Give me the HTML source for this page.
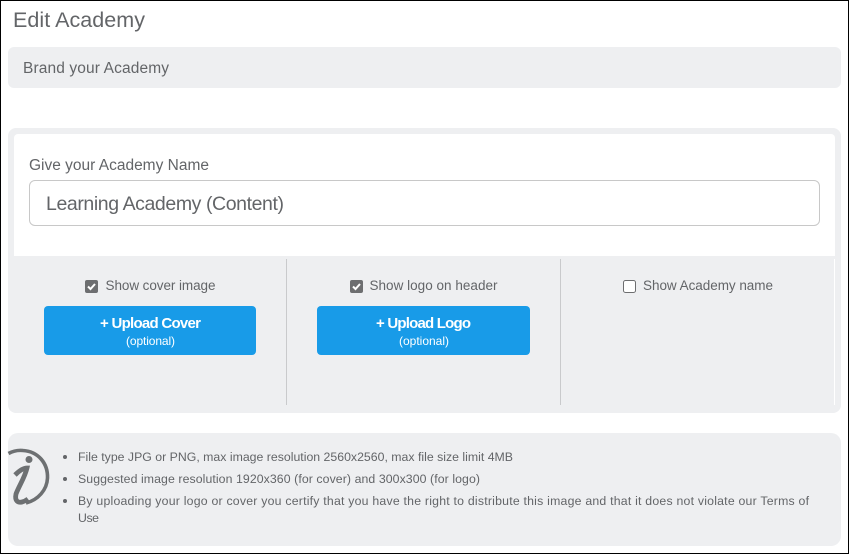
<!DOCTYPE html>
<html><head><meta charset="utf-8"><style>
html,body{margin:0;padding:0;background:#fff}
body{width:849px;height:554px;position:relative;overflow:hidden}
.a{position:absolute;box-sizing:border-box}
svg{position:absolute;left:0;top:0}
text{font-family:"Liberation Sans",sans-serif;fill:#636568}
</style></head><body>
<div class="a" style="left:0;top:0;width:849px;height:554px;border:1px solid #000"></div>
<div class="a" style="left:8px;top:47px;width:833px;height:41px;background:#eeeff1;border-radius:6px"></div>
<div class="a" style="left:8px;top:128px;width:833px;height:285px;background:#eeeff1;border-radius:8px"></div>
<div class="a" style="left:14px;top:134px;width:821px;height:122px;background:#fff;border-radius:4px 4px 0 0"></div>
<div class="a" style="left:29px;top:180px;width:791px;height:46px;background:#fff;border:1px solid #c8c8c8;border-radius:6px"></div>
<div class="a" style="left:286px;top:259px;width:1px;height:146px;background:#c9cacc"></div>
<div class="a" style="left:560px;top:259px;width:1px;height:146px;background:#c9cacc"></div>
<div class="a" style="left:834px;top:259px;width:1px;height:146px;background:#fff"></div>
<div class="a" style="left:44px;top:306px;width:212px;height:49px;background:#189be8;border-radius:4px"></div>
<div class="a" style="left:317px;top:306px;width:213px;height:49px;background:#189be8;border-radius:4px"></div>
<div class="a" style="left:8px;top:433px;width:833px;height:113px;background:#eeeff1;border-radius:10px"></div>
<svg width="849" height="554" viewBox="0 0 849 554">
<rect x="85" y="280" width="13" height="13" rx="2" fill="#6d6e70"/>
<path d="M88 286.500l2.500 2.500 4.500-5" fill="none" stroke="#fff" stroke-width="2"/>
<rect x="350" y="280" width="13" height="13" rx="2" fill="#6d6e70"/>
<path d="M353 286.500l2.500 2.500 4.500-5" fill="none" stroke="#fff" stroke-width="2"/>
<rect x="623.500" y="280.500" width="12" height="12" rx="2" fill="#fff" stroke="#6d6e70"/>
<circle cx="65" cy="457" r="2" fill="#636568"/>
<circle cx="65" cy="479" r="2" fill="#636568"/>
<circle cx="65" cy="501" r="2" fill="#636568"/>
<path d="M8.500 453.500C13 451 18 450 23 450.500C38 451.500 48 463 47.500 478C47 490 38 500 26 503" fill="none" stroke="#6d7072" stroke-width="3.600"/>
<path d="M15 475C19 471 23 468 27 468C25 477 19 486 16 494C14.500 501 18 503 22 502C24 501.500 26 500.500 28 499" fill="none" stroke="#6d7072" stroke-width="4.800"/>
<circle cx="29" cy="459.500" r="3.500" fill="#6d7072"/>
<text x="13" y="27" font-size="21.500" textLength="132" lengthAdjust="spacing">Edit Academy</text>
<text x="23" y="73" font-size="15.500" textLength="146" lengthAdjust="spacing">Brand your Academy</text>
<text x="29" y="170" font-size="15.500" textLength="180" lengthAdjust="spacing">Give your Academy Name</text>
<text x="46" y="210" font-size="19.500" textLength="238" lengthAdjust="spacing">Learning Academy (Content)</text>
<text x="105.500" y="290" font-size="13.500" textLength="110" lengthAdjust="spacing">Show cover image</text>
<text x="369.500" y="290" font-size="13.500" textLength="128" lengthAdjust="spacing">Show logo on header</text>
<text x="643" y="290" font-size="13.500" textLength="130" lengthAdjust="spacing">Show Academy name</text>
<text x="100" y="328" font-size="15" font-weight="700" textLength="101" lengthAdjust="spacing" style="fill:#fff">+ Upload Cover</text>
<text x="376" y="328" font-size="15" font-weight="700" textLength="95" lengthAdjust="spacing" style="fill:#fff">+ Upload Logo</text>
<text x="126" y="345" font-size="12" textLength="49" lengthAdjust="spacing" style="fill:#fff">(optional)</text>
<text x="399" y="345" font-size="12" textLength="50" lengthAdjust="spacing" style="fill:#fff">(optional)</text>
<text x="78" y="461" font-size="12.300" textLength="435" lengthAdjust="spacing">File type JPG or PNG, max image resolution 2560x2560, max file size limit 4MB</text>
<text x="78" y="483" font-size="12.300" textLength="402" lengthAdjust="spacing">Suggested image resolution 1920x360 (for cover) and 300x300 (for logo)</text>
<text x="78" y="505" font-size="12.300" textLength="731" lengthAdjust="spacing">By uploading your logo or cover you certify that you have the right to distribute this image and that it does not violate our Terms of</text>
<text x="78" y="522" font-size="12.300" textLength="21" lengthAdjust="spacing">Use</text>
</svg>
</body></html>
